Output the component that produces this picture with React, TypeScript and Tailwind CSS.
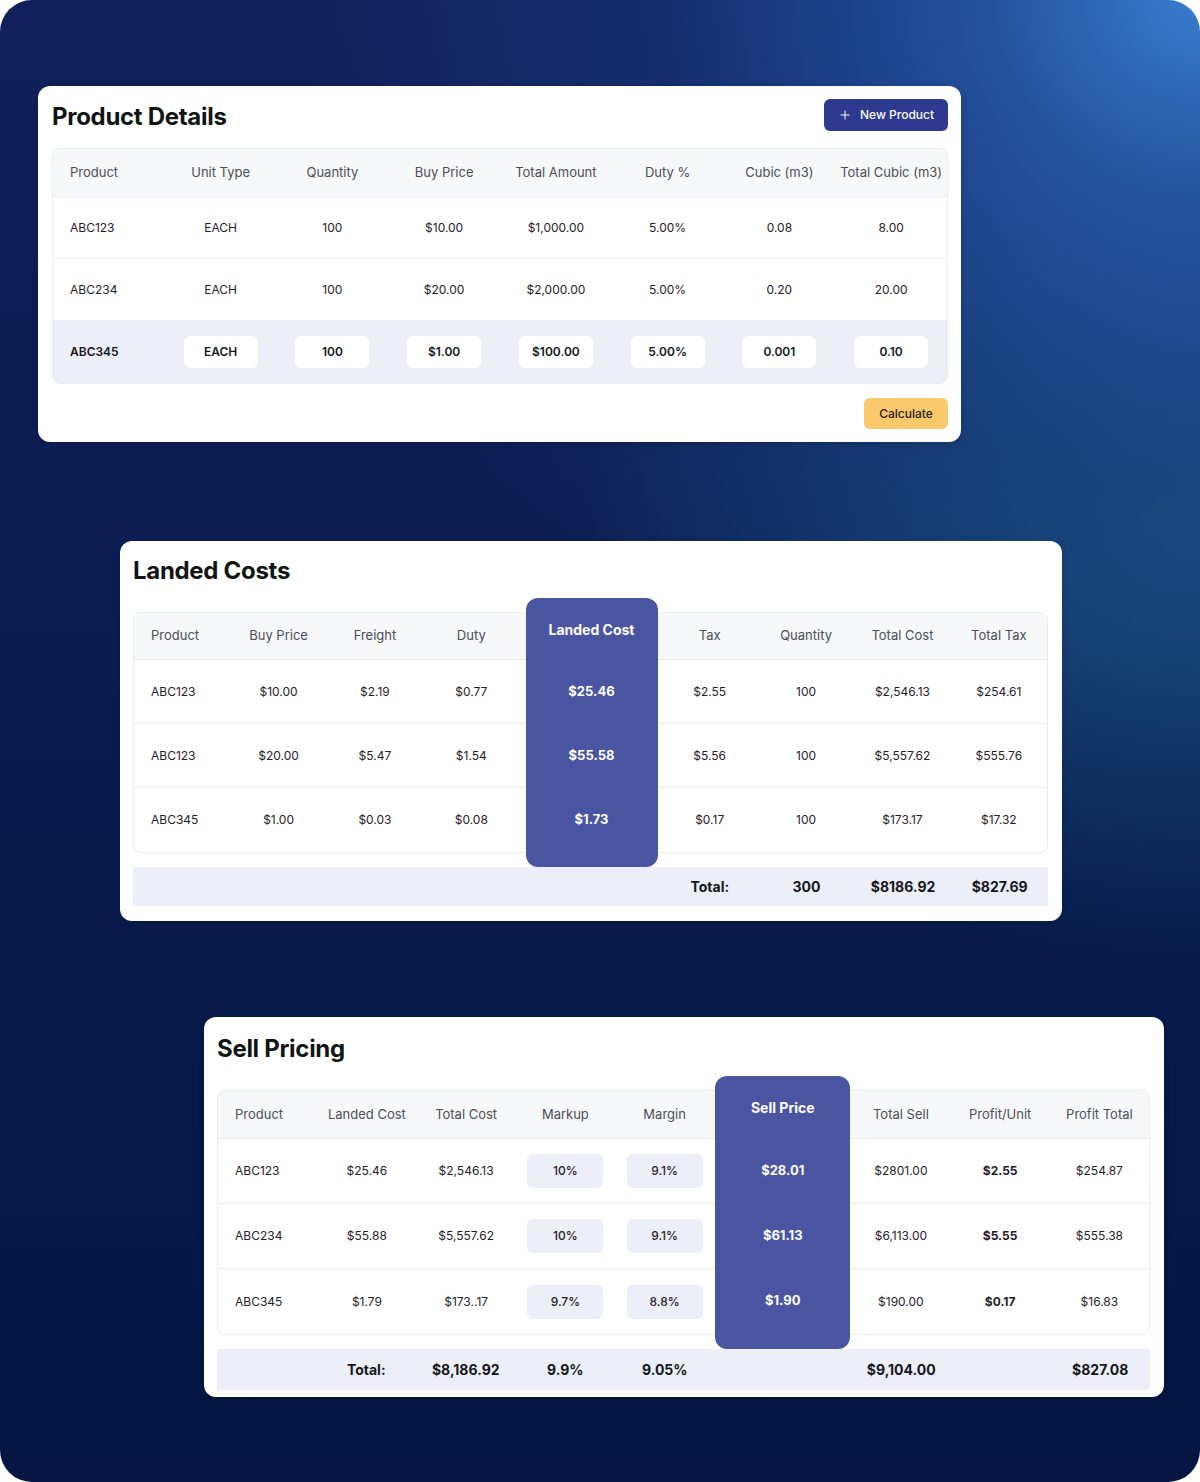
import React from 'react';
import { Plus } from 'lucide-react';

const pdHead = ['Product', 'Unit Type', 'Quantity', 'Buy Price', 'Total Amount', 'Duty %', 'Cubic (m3)', 'Total Cubic (m3)'];
const pdRows = [
  ['ABC123', 'EACH', '100', '$10.00', '$1,000.00', '5.00%', '0.08', '8.00'],
  ['ABC234', 'EACH', '100', '$20.00', '$2,000.00', '5.00%', '0.20', '20.00'],
];
const pdEdit = ['ABC345', 'EACH', '100', '$1.00', '$100.00', '5.00%', '0.001', '0.10'];

type Col = { head: string; cells: React.ReactNode[]; first?: boolean; bold?: boolean };

const landedLeft: Col[] = [
  { head: 'Product', cells: ['ABC123', 'ABC123', 'ABC345'], first: true },
  { head: 'Buy Price', cells: ['$10.00', '$20.00', '$1.00'] },
  { head: 'Freight', cells: ['$2.19', '$5.47', '$0.03'] },
  { head: 'Duty', cells: ['$0.77', '$1.54', '$0.08'] },
];
const landedRight: Col[] = [
  { head: 'Tax', cells: ['$2.55', '$5.56', '$0.17'] },
  { head: 'Quantity', cells: ['100', '100', '100'] },
  { head: 'Total Cost', cells: ['$2,546.13', '$5,557.62', '$173.17'] },
  { head: 'Total Tax', cells: ['$254.61', '$555.76', '$17.32'] },
];

const Chip = ({ v }: { v: string }) => (
  <div className="w-[76px] h-[34px] rounded-md bg-[#eceef8] flex items-center justify-center font-medium text-[#1f2128]">{v}</div>
);

const sellLeft: Col[] = [
  { head: 'Product', cells: ['ABC123', 'ABC234', 'ABC345'], first: true },
  { head: 'Landed Cost', cells: ['$25.46', '$55.88', '$1.79'] },
  { head: 'Total Cost', cells: ['$2,546.13', '$5,557.62', '$173..17'] },
  { head: 'Markup', cells: [<Chip v="10%" />, <Chip v="10%" />, <Chip v="9.7%" />] },
  { head: 'Margin', cells: [<Chip v="9.1%" />, <Chip v="9.1%" />, <Chip v="8.8%" />] },
];
const sellRight: Col[] = [
  { head: 'Total Sell', cells: ['$2801.00', '$6,113.00', '$190.00'] },
  { head: 'Profit/Unit', cells: ['$2.55', '$5.55', '$0.17'], bold: true },
  { head: 'Profit Total', cells: ['$254.87', '$555.38', '$16.83'] },
];

const Column = ({ col, rowH, headH, isLast }: { col: Col; rowH: string; headH: string; isLast?: boolean }) => (
  <div className="flex-1 flex flex-col">
    <div
      className={`${headH} flex items-center bg-[#f7f8fa] border-b border-[#ebecf0] text-[13px] text-[#4a4e56] ${
        col.first ? 'justify-start pl-[17px] rounded-tl-lg' : 'justify-center'
      } ${isLast ? 'rounded-tr-lg' : ''}`}
    >
      {col.head}
    </div>
    {col.cells.map((c, i) => (
      <div
        key={i}
        className={`${rowH} flex items-center text-xs text-[#1f2128] ${col.first ? 'justify-start pl-[17px]' : 'justify-center'} ${
          col.bold ? 'font-bold' : ''
        } ${i < col.cells.length - 1 ? 'border-b border-[#ebecf0]' : ''}`}
      >
        {c}
      </div>
    ))}
  </div>
);

const HighlightColumn = ({
  head,
  cells,
  rowH,
  headH,
  wrapW,
  boxPos,
}: {
  head: string;
  cells: string[];
  rowH: string;
  headH: string;
  wrapW: string;
  boxPos: string;
}) => (
  <div className={`relative ${wrapW} flex flex-col`}>
    <div className={`${headH} bg-[#f7f8fa] border-b border-[#ebecf0]`} />
    {cells.map((_, i) => (
      <div key={i} className={`${rowH} ${i < cells.length - 1 ? 'border-b border-[#ebecf0]' : ''}`} />
    ))}
    <div className={`absolute ${boxPos} -top-[15px] -bottom-[15px] rounded-xl bg-[#4a55a2] flex flex-col text-white`}>
      <div className="h-[62px] flex items-center justify-center text-[14px] font-bold">{head}</div>
      {cells.map((c, i) => (
        <div key={i} className={`${rowH} flex items-center justify-center text-[13px] font-bold`}>
          {c}
        </div>
      ))}
    </div>
  </div>
);

const TotalCell = ({ v }: { v?: string }) => (
  <div className="flex-1 flex items-center justify-center text-[14px] font-bold text-[#15171c]">{v}</div>
);

const App: React.FC = () => {
  return (
    <div className="w-[1200px] h-[1482px] bg-white font-['Inter',sans-serif]">
      <div className="w-full h-full rounded-[32px] overflow-hidden flex flex-col bg-[image:radial-gradient(ellipse_900px_820px_at_100%_0%,rgba(58,128,212,0.95)_0%,rgba(42,100,182,0.7)_25%,rgba(30,70,145,0.35)_60%,rgba(20,50,110,0)_100%),radial-gradient(ellipse_620px_440px_at_100%_36%,rgba(34,112,150,0.55)_0%,rgba(20,60,110,0)_100%),linear-gradient(180deg,#10205a_0%,#0b1d52_40%,#061949_70%,#031540_100%)]">
        {/* Product Details */}
        <div className="mt-[86px] ml-[38px] w-[923px] bg-white rounded-xl shadow-[0_2px_6px_rgba(0,0,0,0.15)] pt-[13px] pl-[14px] pr-[13px] pb-[13px]">
          <div className="h-8 flex items-center justify-between">
            <h2 className="pt-1 text-[24px] font-bold text-[#111614] tracking-[-0.3px]">Product Details</h2>
            <button className="h-8 w-[124px] rounded-md bg-[#2e3a8f] text-white text-xs font-medium flex items-center justify-center gap-2">
              <Plus size={14} strokeWidth={1.75} />
              New Product
            </button>
          </div>
          <div className="mt-[17px] border border-[#ebecf0] rounded-lg overflow-hidden">
            <div className="grid grid-cols-8 h-12 bg-[#f7f8fa] border-b border-[#ebecf0] text-[13px] text-[#4a4e56]">
              {pdHead.map((h, i) => (
                <div key={h} className={`flex items-center ${i === 0 ? 'pl-[17px]' : 'justify-center'}`}>
                  {h}
                </div>
              ))}
            </div>
            {pdRows.map((r) => (
              <div key={r[0]} className="grid grid-cols-8 h-[62px] border-b border-[#ebecf0] text-xs text-[#1f2128]">
                {r.map((c, i) => (
                  <div key={i} className={`flex items-center ${i === 0 ? 'pl-[17px]' : 'justify-center'}`}>
                    {c}
                  </div>
                ))}
              </div>
            ))}
            <div className="grid grid-cols-8 h-[62px] bg-[#eceef8] text-xs font-semibold text-[#15171c]">
              {pdEdit.map((c, i) =>
                i === 0 ? (
                  <div key={i} className="flex items-center pl-[17px]">
                    {c}
                  </div>
                ) : (
                  <div key={i} className="flex items-center justify-center">
                    <div className="w-[74px] h-8 rounded-md bg-white flex items-center justify-center">{c}</div>
                  </div>
                )
              )}
            </div>
          </div>
          <div className="mt-[14px] flex justify-end">
            <button className="h-[31px] w-[84px] rounded-md bg-[#f9c96b] text-xs font-medium text-[#1f2128]">Calculate</button>
          </div>
        </div>

        {/* Landed Costs */}
        <div className="mt-[99px] ml-[120px] w-[942px] bg-white rounded-xl shadow-[0_2px_6px_rgba(0,0,0,0.15)] pt-[14px] pl-[13px] pr-[14px] pb-[15px]">
          <h2 className="h-8 flex items-center text-[24px] font-bold text-[#111614] tracking-[-0.3px]">Landed Costs</h2>
          <div className="mt-[25px] border border-[#ebecf0] rounded-lg flex">
            {landedLeft.map((c) => (
              <Column key={c.head} col={c} rowH="h-16" headH="h-[47px]" />
            ))}
            <HighlightColumn
              head="Landed Cost"
              cells={['$25.46', '$55.58', '$1.73']}
              rowH="h-16"
              headH="h-[47px]"
              wrapW="w-[142px]"
              boxPos="left-[6px] right-[4px]"
            />
            {landedRight.map((c, i) => (
              <Column key={c.head} col={c} rowH="h-16" headH="h-[47px]" isLast={i === landedRight.length - 1} />
            ))}
          </div>
          <div className="mt-[14px] h-[39px] bg-[#eceef8] flex">
            <TotalCell />
            <TotalCell />
            <TotalCell />
            <TotalCell />
            <div className="w-[142px]" />
            <TotalCell v="Total:" />
            <TotalCell v="300" />
            <TotalCell v="$8186.92" />
            <TotalCell v="$827.69" />
          </div>
        </div>

        {/* Sell Pricing */}
        <div className="mt-[96px] ml-[204px] w-[960px] bg-white rounded-xl shadow-[0_2px_6px_rgba(0,0,0,0.15)] pt-[16px] pl-[13px] pr-[14px] pb-[7px]">
          <h2 className="h-8 flex items-center text-[24px] font-bold text-[#111614] tracking-[-0.3px]">Sell Pricing</h2>
          <div className="mt-[25px] border border-[#ebecf0] rounded-lg flex">
            {sellLeft.map((c) => (
              <Column key={c.head} col={c} rowH="h-[65px]" headH="h-12" />
            ))}
            <HighlightColumn
              head="Sell Price"
              cells={['$28.01', '$61.13', '$1.90']}
              rowH="h-[65px]"
              headH="h-12"
              wrapW="w-[137px]"
              boxPos="left-[1px] right-[1px]"
            />
            {sellRight.map((c, i) => (
              <Column key={c.head} col={c} rowH="h-[65px]" headH="h-12" isLast={i === sellRight.length - 1} />
            ))}
          </div>
          <div className="mt-[14px] h-[41px] bg-[#eceef8] flex">
            <TotalCell />
            <TotalCell v="Total:" />
            <TotalCell v="$8,186.92" />
            <TotalCell v="9.9%" />
            <TotalCell v="9.05%" />
            <div className="w-[137px]" />
            <TotalCell v="$9,104.00" />
            <TotalCell />
            <TotalCell v="$827.08" />
          </div>
        </div>
      </div>
    </div>
  );
};

export default App;
